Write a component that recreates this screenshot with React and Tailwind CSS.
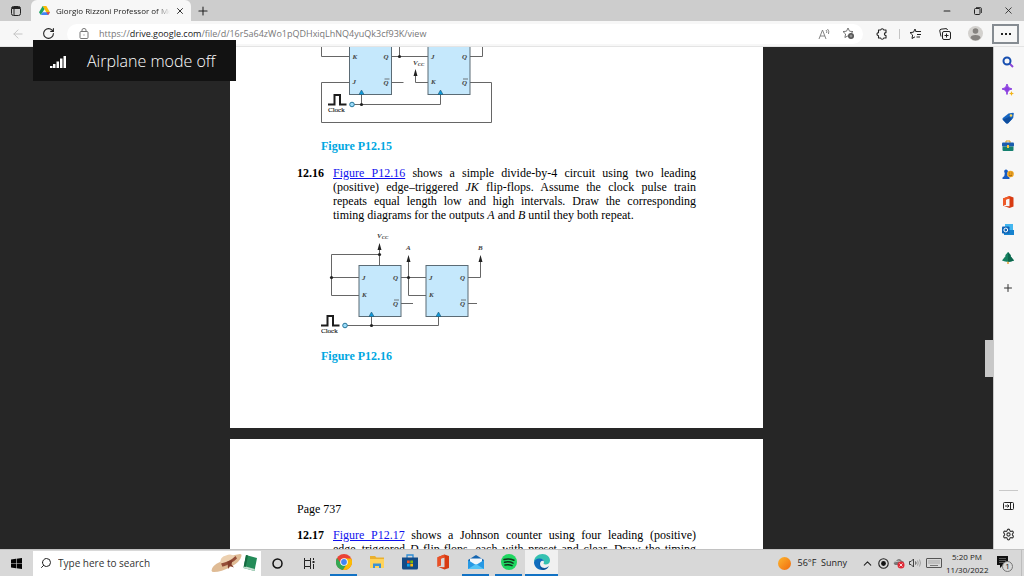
import React from "react";
import { Search, Settings, Plus, X, Minus, ArrowLeft, RotateCw, ChevronUp } from "lucide-react";

const SANS = "font-['Open_Sans','Noto_Sans',sans-serif]";
const SERIF = "font-['Liberation_Serif',serif]";

function FlipFlop({ x, y, height, rows }) {
  return (
    <g>
      <rect x={x} y={y} width="42" height={height} fill="#c5e8fc" stroke="#5b6b75" />
      {rows.map((row) => (
        <g key={row.y} fontSize="7" fontStyle="italic" fontWeight="700" fill="#444">
          {row.left && <text x={x + 3} y={row.leftY || row.y}>{row.left}</text>}
          <text x={x + 34} y={row.y}>Q</text>
          {row.bar && <path d={`M${x + 35} ${row.y - 6}h5`} stroke="#555" strokeWidth="0.8" />}
        </g>
      ))}
    </g>
  );
}

function Arrow({ x, y }) {
  return <path d={`M${x} ${y}l2 7h-4z`} fill="#222" />;
}

function Dot({ x, y }) {
  return <circle cx={x} cy={y} r="1.6" fill="#222" />;
}

function ClockTriangle({ x, y }) {
  return <path d={`M${x} ${y - 4}l2.5 4.5h-5z`} fill="#0c9be0" stroke="#23566f" strokeWidth="0.6" />;
}

function ClockSource({ x, y }) {
  return (
    <g>
      <path d={`M${x} ${y}h6.500v-9.500h5.500v9.500h6.500`} fill="none" stroke="#1d1d1d" strokeWidth="2" />
      <text x={x} y={y + 7.5} fontSize="7" fill="#222" stroke="#222" strokeWidth="0.15">Clock</text>
      <circle cx={x + 24} cy={y} r="2.3" fill="#9cdcfa" stroke="#26769b" />
    </g>
  );
}

function Vcc({ x, y }) {
  return (
    <text x={x} y={y} fontSize="7" fontStyle="italic" fontWeight="700" fill="#444">
      V<tspan fontSize="5" dy="1">CC</tspan>
    </text>
  );
}

function Figure15() {
  return (
    <svg className={`ml-6 block ${SERIF}`} width="172" height="77" viewBox="0 0 172 77" role="img" aria-label="Figure P12.15">
      <path
        d="M.5 0V9.500H28M28 35.500H.5V75.500H170.500V35.500H149M70 9.500H107M78.500 0V9.500M70 35.500H82.500M149 9.500H161.500V0M94.500 26V35.500H107M33 57.500H119.500V47M40.500 57.500V47"
        fill="none"
        stroke="#666"
      />
      <FlipFlop x={28.5} y={-10} height={57.5} rows={[{ left: "K", y: 12 }, { left: "J", leftY: 37, y: 38, bar: true }]} />
      <FlipFlop x={107} y={-10} height={57.5} rows={[{ left: "J", y: 12 }, { left: "K", leftY: 37, y: 38, bar: true }]} />
      <Dot x={78.5} y={9.5} />
      <Dot x={40.5} y={57.5} />
      <Arrow x={94.5} y={22} />
      <Vcc x={92} y={18} />
      <ClockTriangle x={40.5} y={47} />
      <ClockTriangle x={119.5} y={47} />
      <ClockSource x={7} y={57.5} />
    </svg>
  );
}

function Figure16() {
  return (
    <svg className={`mt-[9px] ml-6 block ${SERIF}`} width="172" height="104" viewBox="0 0 172 104" role="img" aria-label="Figure P12.16">
      <path
        d="M58.500 16V34.500M58.500 23.500H10.500V64.500H38M10.500 46.500H38M80 46.500H105M87.500 28V64.500H105M147 46.500H159.500V28M80 72.500H92M147 72.500H156M26 94.500H117.500V85M50.500 94.500V85"
        fill="none"
        stroke="#666"
      />
      <FlipFlop x={38} y={34.5} height={51} rows={[{ left: "J", y: 49 }, { left: "K", leftY: 66, y: 75, bar: true }]} />
      <FlipFlop x={105} y={34.5} height={51} rows={[{ left: "J", y: 49 }, { left: "K", leftY: 66, y: 75, bar: true }]} />
      <Dot x={58.5} y={23.5} />
      <Dot x={10.5} y={46.5} />
      <Dot x={87.5} y={46.5} />
      <Dot x={50.5} y={94.5} />
      <Arrow x={58.5} y={12} />
      <Arrow x={87.5} y={24} />
      <Arrow x={159.5} y={24} />
      <Vcc x={56} y={7} />
      <g fontSize="7" fontStyle="italic" fontWeight="700" fill="#444">
        <text x="85" y="19">A</text>
        <text x="157" y="19">B</text>
      </g>
      <ClockTriangle x={50.5} y={85} />
      <ClockTriangle x={117.5} y={85} />
      <ClockSource x={0} y={94.5} />
    </svg>
  );
}

function Problem({ number, children }) {
  return (
    <div className="mt-3 flex text-xs leading-[14px]">
      <b className="w-9 shrink-0">{number}</b>
      <p className="flex-1">{children}</p>
    </div>
  );
}

function Line({ children }) {
  return <span className="block whitespace-nowrap [text-align-last:justify]">{children}</span>;
}

function DriveIcon() {
  return (
    <svg width="11" height="11" viewBox="0 0 24 22">
      <path d="M8 1h8l8 14h-8z" fill="#fbbc04" />
      <path d="M8 1 0 15l4 6 8-13z" fill="#1ea362" />
      <path d="M4 21 8 15h16l-4 6z" fill="#4285f4" />
      <path d="M16 15h8l-4 6z" fill="#ea4335" />
    </svg>
  );
}

function TabStrip() {
  return (
    <header className="flex h-[21px] shrink-0 items-center bg-[#cdcdcd] text-[#222]">
      <button aria-label="Tab actions" className="flex w-[31px] justify-center">
        <svg width="10" height="10" viewBox="0 0 10 10" fill="none" stroke="#222">
          <rect x=".5" y=".5" width="9" height="9" rx="2" />
          <path d="M1 2h8" strokeWidth="2" />
          <path d="M3 2v7" />
        </svg>
      </button>
      <div className="flex h-full w-40 items-center rounded-t-md bg-[#f7f7f7] pr-[6px] pl-2">
        <DriveIcon />
        <span className="ml-[6px] flex-1 overflow-hidden text-[8px] whitespace-nowrap [mask-image:linear-gradient(to_right,black_88%,transparent)]">
          Giorgio Rizzoni Professor of Mec
        </span>
        <button aria-label="Close tab" className="ml-[5px]">
          <X size={10} strokeWidth={2.2} />
        </button>
      </div>
      <button aria-label="New tab" className="ml-[5px]">
        <Plus size={14} strokeWidth={1.8} />
      </button>
      <div className="ml-auto flex">
        <button aria-label="Minimize" className="flex w-[30px] items-center justify-center">
          <Minus size={10} strokeWidth={2.5} />
        </button>
        <button aria-label="Restore" className="flex w-[31px] items-center justify-center">
          <svg width="8" height="8" viewBox="0 0 8 8" fill="none" stroke="#222">
            <rect x=".5" y="1.500" width="5.500" height="6" rx="1" />
            <path d="M2 .5h4q1.500 0 1.500 1.500v4" strokeWidth=".8" />
          </svg>
        </button>
        <button aria-label="Close" className="flex w-[31px] items-center justify-center">
          <X size={11} strokeWidth={1.8} />
        </button>
      </div>
    </header>
  );
}

const STAR = "M6 1l1.500 3.200 3.500.4-2.600 2.400.7 3.500L6 8.800l-3.100 1.700.7-3.500L1 4.600l3.500-.4z";

function Toolbar() {
  return (
    <div className="flex h-[26px] shrink-0 items-center border-b border-[#e4e4e4] bg-[#f7f7f7] pr-[5px]">
      <button aria-label="Back" className="flex w-9 justify-center text-[#c4c4c4]">
        <ArrowLeft size={14} strokeWidth={1.7} />
      </button>
      <button aria-label="Refresh" className="mr-[7px] flex w-6 justify-center text-[#222]">
        <RotateCw size={13} strokeWidth={2} />
      </button>
      <div className="flex h-5 flex-1 items-center rounded-full bg-white pr-2 pl-3">
        <svg width="10" height="11" viewBox="0 0 10 11" fill="none" stroke="#777">
          <rect x="1" y="3.500" width="8" height="7" rx="1" />
          <path d="M3 3.500V2q0-1.500 2-1.500T7 2v1.500M5 6.500v1" />
        </svg>
        <div className="ml-[10px] flex-1 text-[9px] whitespace-nowrap text-[#777]">
          https://<span className="text-[#222]">drive.google.com</span>/file/d/16r5a64zWo1pQDHxiqLhNQ4yuQk3cf93K/view
        </div>
        <button aria-label="Read aloud" className="mr-3">
          <svg width="12" height="12" viewBox="0 0 12 12" fill="none" stroke="#777" strokeWidth=".9">
            <path d="M1 11 4.500 2 8 11M2.200 8h4.600M8 2q1.200 1 .6 3M9.500 1q2 2 1 5" />
          </svg>
        </button>
        <button aria-label="Add to favorites">
          <svg width="13" height="13" viewBox="0 0 13 13" fill="none" stroke="#666" strokeWidth=".9">
            <path d={STAR} />
            <circle cx="9" cy="9" r="3" fill="#555" stroke="none" />
            <path d="M7.500 9h3M9 7.500v3" stroke="#ccc" strokeWidth=".6" />
          </svg>
        </button>
      </div>
      <button aria-label="Extensions" className="ml-px flex w-[35px] justify-center">
        <svg width="12" height="12" viewBox="0 0 12 12" fill="none" stroke="#222" strokeWidth="1.100">
          <path d="M3.500 2h1.200q.3-1.300 1.500-1.300T7.700 2H10v2.600q-1.600.1-1.600 1.500T10 7.600V10H7.700q-.3 1.300-1.500 1.300T4.700 10H2.500V7.700Q.9 7.400.9 6.100t1.600-1.500V2z" strokeLinejoin="round" />
        </svg>
      </button>
      <span className="h-[10px] w-px bg-[#c4c4c4]" />
      <button aria-label="Favorites" className="flex w-[30px] justify-center">
        <svg width="13" height="12" viewBox="0 0 13 12" fill="none" stroke="#222">
          <path d="M7 3.500 6 1 4.500 4.200 1 4.600 3.600 7 3 10.500l3-1.700" />
          <path d="M6.500 3.500H12M8 6.500h4M7.500 9H11" />
        </svg>
      </button>
      <button aria-label="Collections" className="flex w-[30px] justify-center">
        <svg width="12" height="12" viewBox="0 0 12 12" fill="none" stroke="#222">
          <rect x="3.500" y="3.500" width="8" height="8" rx="1.500" />
          <path d="M7.500 5.500v4M5.500 7.500h4M2 8.500.8 3Q.5 1.500 2 1.200L7 .6q1.200 0 1.500 1.400" />
        </svg>
      </button>
      <button aria-label="Profile" className="flex w-[30px] justify-center">
        <svg width="15" height="15" viewBox="0 0 15 15">
          <circle cx="7.500" cy="7.500" r="7.500" fill="#d3d1ce" />
          <circle cx="7.500" cy="5" r="2.800" fill="#85827f" />
          <path d="M2.500 12q0-3 5-3t5 3q-2 2.500-5 2.500T2.500 12" fill="#85827f" />
        </svg>
      </button>
      <button aria-label="Settings and more" className="ml-[2px] flex h-5 w-[27px] items-center justify-center gap-[2px] border-2 border-[#868c92]">
        <i className="size-[2px] bg-[#222]" />
        <i className="size-[2px] bg-[#222]" />
        <i className="size-[2px] bg-[#222]" />
      </button>
    </div>
  );
}

const SIDEBAR_APPS = [
  { name: "Search", art: <g fill="none" strokeWidth="2"><path d="m7.500 7.500 3.500 3.500" stroke="#8b45d8" /><circle cx="5" cy="5" r="3.500" stroke="#174fb0" /></g> },
  { name: "Discover", art: <g><path d="M5 0q.5 4.500 5 5-4.500.5-5 5.500Q4.500 5.500 0 5q4.500-.5 5-5" fill="#8b3fe0" stroke="#8b3fe0" /><path d="m9.500 7 .7 1.800 1.800.7-1.800.7-.7 1.800-.7-1.800L7 9.500l1.800-.7z" fill="#f3b51b" /></g> },
  { name: "Shopping", art: <g><path d="M6.500 1.500 11 .8q.8 0 .8.8l-.6 4.400-5 5.200q-1 .8-2 0L.8 8q-.8-1 0-2z" fill="#1766c2" /><path d="M1 7.500 7 5l3 2-4 4.200q-1 .8-2 0z" fill="#0f4d9d" /><circle cx="9" cy="3.500" r="1.300" fill="#ffd34e" /></g> },
  { name: "Tools", art: <g><path d="M4 3V1h4v2" fill="none" stroke="#d69a20" /><rect x="0" y="2.500" width="12" height="4" rx="1" fill="#1b5cae" /><path d="M.5 6.500h11V10q0 1-1 1h-9q-1 0-1-1z" fill="#14806f" /><rect x="5" y="5" width="2" height="3" fill="#ffc83d" /></g> },
  { name: "Games", art: <g><path d="M2 11h5.500V9.500L5.500 8l-.3-3q1.300-1 .5-2.500Q4 .5 2.300 2.500 1.800 4 2.800 5l-.5 3L.5 9.500V11z" fill="#175cc2" /><circle cx="8.500" cy="6" r="3.300" fill="#eca323" /><path d="M7 5h.8M9.500 5h.8M7 7q1.500 1.500 3 0" stroke="#844c0a" fill="none" strokeWidth=".8" /></g> },
  { name: "Office", art: <g><path d="M7.500 0 11.500 1.500v9l-4 1.500-5.500-2 5.500.3V2.500L4 3.500v5L1 9.700V2.500z" fill="#d83b12" /><path d="M7.500 0 1 2.500v7.200l3-1.200v-5l3.500-1z" fill="#ee5a28" /></g> },
  { name: "Outlook", art: <g><rect x="3" y="0" width="8" height="7" fill="#43b6ef" /><path d="M2 6h10v5H2z" fill="#1683cf" /><rect x="0" y="2.500" width="7.500" height="7" rx=".8" fill="#0f65b8" /><circle cx="3.800" cy="6" r="1.900" fill="none" stroke="#fff" /></g> },
  { name: "Tree", art: <g><path d="M5.300 9h1.400v3H5.300z" fill="#e69a26" /><path d="m6 0 3 3.500-.8.3L12 8.500Q9 10 6 9.500 3 10 0 8.500l3.800-4.700L3 3.500z" fill="#158060" /><path d="m6 0 3 3.500-.8.3L12 8.500Q9 10 6 9.500z" fill="#0c674d" /></g> },
];

function Sidebar() {
  return (
    <aside className="flex w-[31px] shrink-0 flex-col items-center border-l border-[#c9c9c9] bg-[#f7f7f7] pt-px pr-[2px] text-[#333]">
      {SIDEBAR_APPS.map((app) => (
        <button key={app.name} aria-label={app.name} className="flex h-7 items-center justify-center">
          <svg width="12" height="12" viewBox="0 0 12 12">{app.art}</svg>
        </button>
      ))}
      <button aria-label="Customize" className="flex h-8 items-center">
        <Plus size={12} strokeWidth={2} />
      </button>
      <div className="mt-auto w-[19px] border-t border-[#c9c9c9]" />
      <button aria-label="Hide sidebar" className="mt-px flex h-7 items-center">
        <svg width="11" height="8" viewBox="0 0 11 8" fill="none" stroke="#222">
          <rect x=".5" y=".5" width="10" height="7" rx="1" />
          <path d="M7.500 1v6M2 4h3.500M4.500 2.500 6 4 4.500 5.500" />
        </svg>
      </button>
      <button aria-label="Settings" className="mb-px flex h-7 items-center">
        <Settings size={13} strokeWidth={2} />
      </button>
    </aside>
  );
}

function Viewer() {
  return (
    <main className={`relative flex-1 overflow-hidden bg-[#262626] text-black ${SERIF}`}>
      <section className="mx-auto w-[533px] bg-white px-[67px] pb-16">
        <Figure15 />
        <h2 className="mt-[14px] ml-6 text-xs font-bold text-[#00a7e1]">Figure P12.15</h2>
        <Problem number="12.16">
          <Line>
            <a href="#p12-16" className="text-[#1010ee] underline">Figure P12.16</a> shows a simple divide-by-4 circuit using two leading
          </Line>
          <Line>(positive) edge–triggered <i>JK</i> flip-flops. Assume the clock pulse train</Line>
          <Line>repeats equal length low and high intervals. Draw the corresponding</Line>
          timing diagrams for the outputs <i>A</i> and <i>B</i> until they both repeat.
        </Problem>
        <Figure16 />
        <h2 id="p12-16" className="mt-[13px] ml-6 text-xs font-bold text-[#00a7e1]">Figure P12.16</h2>
      </section>
      <section className="mx-auto mt-[11px] w-[533px] bg-white px-[67px] pt-[63px] pb-16">
        <p className="text-xs leading-[14px]">Page 737</p>
        <Problem number="12.17">
          <Line>
            <a href="#p12-17" className="text-[#1010ee] underline">Figure P12.17</a> shows a Johnson counter using four leading (positive)
          </Line>
          <Line>edge–triggered <i>D</i> flip-flops, each with preset and clear. Draw the timing</Line>
        </Problem>
      </section>
      <div className="absolute top-[293px] right-0 h-[37px] w-2 bg-[#c8c8c8]" />
    </main>
  );
}

const TASKBAR_APPS = [
  { name: "Chrome", bar: "w-[27px]", art: <g><circle cx="8" cy="8" r="8" fill="#ea4335" /><path d="M1 4a8 8 0 0 0 6 12l4-6.500H5z" fill="#34a853" /><path d="M8 4.500h7.200A8 8 0 0 1 7 16l4.200-6.500z" fill="#fbbc04" /><circle cx="8" cy="8" r="3.800" fill="#fff" /><circle cx="8" cy="8" r="2.900" fill="#4285f4" /></g> },
  { name: "File Explorer", art: <g><path d="M1 2h5l1.500 1.500H15V14H1z" fill="#eab02e" /><path d="M1 5h14v9H1z" fill="#ffd35b" /><path d="M4 14V9.500h8V14h-2v-2H6v2z" fill="#3d91d5" /></g> },
  { name: "Microsoft Store", art: <g><path d="M5 4V1h6v3" fill="none" stroke="#2d8cd5" strokeWidth="1.300" /><path d="M0 3.500h16V14q0 1.500-1.500 1.500h-13Q0 15.500 0 14z" fill="#124b87" /><path d="M5 6.500h2.700v2.700H5z" fill="#f35325" /><path d="M8.300 6.500H11v2.700H8.300z" fill="#81bc06" /><path d="M5 9.800h2.700v2.700H5z" fill="#05a6f0" /><path d="M8.300 9.800H11v2.700H8.300z" fill="#ffba08" /></g> },
  { name: "Office", art: <g><path d="M9.500.5 14 2v12l-4.500 1.500L3.500 13l6 .3V3.500L6 4.500v6.700l-3.500 1.500V3.200z" fill="#d83b12" /><path d="M9.500.5 2.500 3.200v9.500L6 11.200V4.500l3.500-1z" fill="#ea5127" /></g> },
  { name: "Mail", bar: "w-[27px]", art: <g><path d="m0 6 8-5 8 5v9H0z" fill="#1465b0" /><path d="M2 4.500h12V11H2z" fill="#f2f7fb" /><path d="m0 6 8 5 8-5v9H0z" fill="#2799e4" /><path d="m0 15 8-5 8 5z" fill="#55c4f6" /></g> },
  { name: "Spotify", bar: "w-[27px]", art: <g><circle cx="8" cy="8" r="8" fill="#1ed760" /><path d="M3 5.500q5-1.500 10 .8M3.500 8.300q4.500-1.200 8.500.8M4 11q4-1 7 .7" fill="none" stroke="#10331c" strokeWidth="1.500" strokeLinecap="round" /></g> },
  { name: "Edge", bar: "w-full", active: true, art: <g><path d="M0 8C0 3 4 0 8.500 0 13 0 16 3 16 6.500 16 9 14 10.500 11.500 10.500c-1.500 0-2.300-.6-1.800-1.400C11 7 9 5 6.500 5 3 5 .5 6.500 0 8" fill="#35c1b1" /><path d="M0 8Q1 4.500 5.500 4.500q4 0 4.500 3Q8 6 6.500 8c-1.500 3 1 6 4 6 2 0 3.500-.8 4.500-2-1.500 3-4 4-7 4-5 0-8-4-8-8" fill="#0f6cbd" /><path d="M6 7.500c-2 3 0 7 4.500 7q2.500-.2 4.300-2.500Q13 15.500 9 16 4 14 6 7.500" fill="#114a8b" /></g> },
];

function Taskbar() {
  return (
    <footer className="flex h-[27px] shrink-0 items-center border-t border-[#c2c2c2] bg-[#d8d8d8] pr-[2px] text-[#222]">
      <button aria-label="Start" className="flex w-[33px] justify-center">
        <svg width="11" height="11" viewBox="0 0 11 11">
          <path d="M0 1.500 5 .8v4.400H0zM5.600.7 11 0v5.200H5.600zM0 5.800h5v4.400l-5-.7zM5.600 5.800H11V11l-5.400-.7z" fill="#050505" />
        </svg>
      </button>
      <label className="flex h-[25px] w-[228px] items-center bg-white pr-[2px] pl-[7px]">
        <Search size={12} strokeWidth={2} className="-scale-x-100" />
        <input
          type="text"
          aria-label="Search"
          placeholder="Type here to search"
          className="ml-[6px] w-0 flex-1 text-[10px] outline-none placeholder:text-[#333]"
        />
        <svg width="48" height="20" viewBox="0 0 48 20">
          <path d="M.5 17.500Q1 12.500 9 9q9-6.500 20-8 2 0 1.500 2-1.500 6-10 10.500Q10 19 3 19q-2.500 0-2.500-1.500" fill="#dfbb95" />
          <path d="M9.500 10Q8.500 4 15 2.500 21 0 25 4.500L21 10l-9 3.500z" fill="#ecd0b0" />
          <path d="m10 10.500 1.500 3.200q9-2.700 14.500-8.200L24.500 3Q19 8.500 10 10.500" fill="#944d38" />
          <path d="m16.500 8.500 5-1.500-1 4.500 2.500 3-4-1.500-2 3z" fill="#823c2b" />
          <path d="m35 2 11 3-2.500 13-11-3z" fill="#238b58" />
          <path d="m32.500 15 11 3 .3-2-11-3z" fill="#c3dfcf" />
          <path d="m35 2 2 .5-2.300 11.500-2-.5z" fill="#156a40" />
        </svg>
      </label>
      <button aria-label="Cortana" className="flex w-8 justify-center">
        <svg width="11" height="11" viewBox="0 0 11 11" fill="none" stroke="#111" strokeWidth="1.500">
          <circle cx="5.500" cy="5.500" r="4.500" />
        </svg>
      </button>
      <button aria-label="Task view" className="mr-[2px] flex w-8 justify-center">
        <svg width="12" height="11" viewBox="0 0 12 11" fill="none" stroke="#222">
          <path d="M1.500 0v2.500h6V0M1.500 11V8.500h6V11M10.500 0v2M10.500 6v5" />
          <path d="M1.500 2.500v6M7.500 2.500v6" />
          <path d="M10.500 3v2" strokeWidth="2" />
        </svg>
      </button>
      {TASKBAR_APPS.map((app) => (
        <button key={app.name} aria-label={app.name} className={`flex h-[26px] w-[33px] flex-col items-center ${app.active ? "bg-[#f0f0f0]" : ""}`}>
          <svg className="my-auto" width="16" height="16" viewBox="0 0 16 16">{app.art}</svg>
          <span className={`h-[2px] bg-[#1272c4] ${app.bar || "w-0"}`} />
        </button>
      ))}
      <div className="ml-auto flex items-center">
        <span className="size-[13px] rounded-full bg-linear-to-br from-[#fbb52e] to-[#f0690c]" />
        <span className="ml-[7px] text-[9px] whitespace-pre">56°F  Sunny</span>
        <ChevronUp size={13} strokeWidth={2} className="ml-[14px]" />
        <svg className="ml-1" width="11" height="11" viewBox="0 0 10 10">
          <circle cx="5" cy="5" r="4.300" fill="none" stroke="#222" />
          <circle cx="5" cy="5" r="2.200" fill="#111" />
        </svg>
        <svg className="ml-1" width="12" height="12" viewBox="0 0 12 12">
          <path d="M2 8Q0 7 1 5q1-1 2-1 3-4 6 0 2 0 2 2v2z" fill="#777" />
          <path d="m1 5 5-1 4 3" stroke="#ddd" strokeWidth=".8" fill="none" />
          <circle cx="8" cy="8" r="3.500" fill="#df2835" />
          <path d="m6.500 6.500 3 3m0-3-3 3" stroke="#fff" strokeWidth=".8" />
        </svg>
        <svg className="ml-1" width="12" height="10" viewBox="0 0 12 10" fill="none" stroke="#333" strokeWidth=".9">
          <path d="M.5 3.500H2L4.500 1v8L2 6.500H.5zM6.500 3.500q1 1.500 0 3" />
          <path d="M8.500 2.500q1.500 2.500 0 5M10.500 1.500q2 3.500 0 7" stroke="#999" />
        </svg>
        <svg className="ml-[5px]" width="16" height="10" viewBox="0 0 16 10" fill="none" stroke="#555">
          <rect x=".5" y=".5" width="15" height="9" rx=".5" />
          <path d="M2.500 3h11M2.500 5h11" strokeDasharray="1 1" stroke="#777" />
          <path d="M4 7.500h8" stroke="#777" />
        </svg>
        <time className="ml-1 w-[42px] text-center text-[8px] leading-[13px] whitespace-nowrap">
          5:20 PM
          <br />
          11/30/2022
        </time>
        <button aria-label="Notifications, 1 new" className="relative mr-2 ml-[9px]">
          <svg width="16" height="17" viewBox="0 0 16 17">
            <path d="M0 1h11v9H6l-3 3v-3H0z" fill="#111" />
            <path d="M2 3.500h7M2 5.500h7M2 7.500h5" stroke="#777" strokeWidth=".7" />
          </svg>
          <span className="absolute right-0 bottom-0 flex size-[11px] items-center justify-center rounded-full border border-[#777] bg-[#d8d8d8] text-[8px]">1</span>
        </button>
        <span className="h-[26px] w-px bg-[#bdbdbd]" />
      </div>
    </footer>
  );
}

function AirplaneToast() {
  return (
    <div role="status" className="absolute top-10 left-[33px] flex h-[41px] w-[203px] items-center bg-[#121212] pl-[17px] text-white">
      <svg width="16" height="14" viewBox="0 0 16 14" fill="#fff">
        <path d="M0 12h2.500v2H0zM3 10h2.500v4H3zM6.500 7.500H9V14H6.500zM10 4.500h2.500V14H10zM13.500 2H16v12h-2.500z" />
      </svg>
      <span className="ml-[21px] text-base font-light whitespace-nowrap">Airplane mode off</span>
    </div>
  );
}

export default function App() {
  return (
    <div className={`relative flex h-screen flex-col overflow-hidden ${SANS}`}>
      <TabStrip />
      <Toolbar />
      <div className="flex min-h-0 flex-1">
        <Viewer />
        <Sidebar />
      </div>
      <Taskbar />
      <AirplaneToast />
    </div>
  );
}
